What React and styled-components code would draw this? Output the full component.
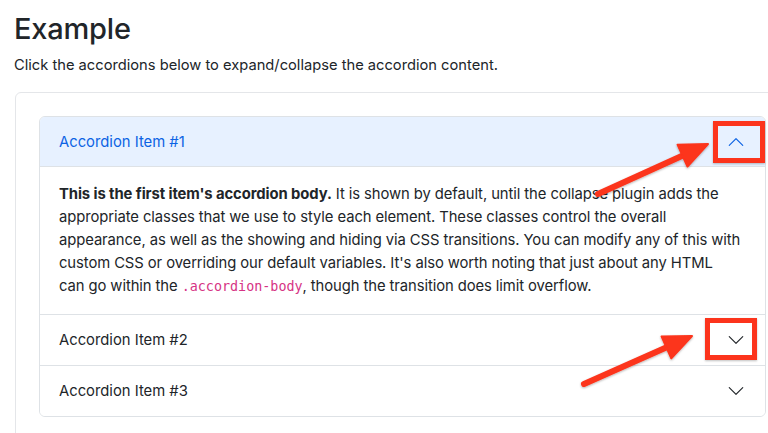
import React, { useState } from "react";
import styled, { createGlobalStyle, css } from "styled-components";

const Global = createGlobalStyle`
  html, body {
    margin: 0;
    padding: 0;
    background: #ffffff;
    overflow: hidden;
  }
  body {
    font-family: Inter, "Liberation Sans", Arial, sans-serif;
    color: #212529;
    -webkit-font-smoothing: antialiased;
  }
`;

const Page = styled.main`
  position: relative;
  width: 768px;
  height: 433px;
  overflow: hidden;
  padding: 11px 0 0 15px;
  box-sizing: border-box;
`;

const Title = styled.h2`
  margin: 0 0 0 -1px;
  font-size: 29px;
  line-height: 35px;
  font-weight: 500;
  letter-spacing: -0.2px;
  color: #212529;
`;

const Lead = styled.p`
  margin: 8px 0 0 -1px;
  font-size: 14.7px;
  line-height: 22px;
  color: #212529;
`;

const Frame = styled.section`
  margin-top: 16px;
  width: 790px;
  height: 400px;
  box-sizing: border-box;
  padding: 23px 23px;
  border: 1px solid #e4e6e9;
  border-radius: 6px;
`;

const Accordion = styled.div`
  width: 725px;
  border: 1px solid #dee2e6;
  border-radius: 6px;
`;

const Item = styled.div`
  position: relative;
  & + & {
    border-top: 1px solid #dee2e6;
  }
`;

const Header = styled.button`
  display: flex;
  align-items: center;
  justify-content: space-between;
  width: 100%;
  box-sizing: border-box;
  height: 50px;
  padding: 0 19px 0 19px;
  border: 0;
  margin: 0;
  font: inherit;
  font-size: 14.8px;
  text-align: left;
  cursor: pointer;
  background: ${(p) => (p.$open ? "#e7f1ff" : "#ffffff")};
  color: ${(p) => (p.$open ? "#0c63e4" : "#212529")};
  ${(p) =>
    p.$open &&
    css`
      border-bottom: 1px solid #dee2e6;
      border-radius: 5px 5px 0 0;
    `}
  ${(p) =>
    p.$last &&
    css`
      border-radius: 0 0 5px 5px;
    `}
`;

const Chevron = styled.svg`
  width: 18px;
  height: 18px;
  flex: none;
  margin-right: 1px;
  transform: ${(p) => (p.$open ? "rotate(180deg)" : "none")};
  color: ${(p) => (p.$open ? "#0c63e4" : "#212529")};
`;

const Body = styled.div`
  padding: 16px 19px 16px 19px;
  font-size: 14.8px;
  line-height: 23px;
  letter-spacing: -0.08px;
  white-space: nowrap;
  color: #212529;
`;

const Code = styled.code`
  font-family: "DejaVu Sans Mono", "Liberation Mono", monospace;
  font-size: 13.4px;
  letter-spacing: 0;
  color: #d63384;
`;

/* red highlight frame drawn over a header's toggle icon */
const Marker = styled.span`
  position: absolute;
  top: ${(p) => p.$top}px;
  right: ${(p) => p.$right}px;
  width: ${(p) => p.$w}px;
  height: ${(p) => p.$h}px;
  box-sizing: border-box;
  border: 5px solid #fc341c;
  box-shadow: 0 1px 2px rgba(0, 0, 0, 0.25);
  pointer-events: none;
`;

const Annotations = styled.svg`
  position: absolute;
  left: 0;
  top: 0;
  width: 768px;
  height: 433px;
  pointer-events: none;
`;

function ChevronIcon({ open }) {
  return (
    <Chevron $open={open} viewBox="0 0 16 16" fill="currentColor" aria-hidden="true">
      <path
        fillRule="evenodd"
        d="M1.646 4.646a.5.5 0 0 1 .708 0L8 10.293l5.646-5.647a.5.5 0 0 1 .708.708l-6 6a.5.5 0 0 1-.708 0l-6-6a.5.5 0 0 1 0-.708z"
      />
    </Chevron>
  );
}

function Arrow({ x1, y1, x2, y2 }) {
  const dx = x2 - x1;
  const dy = y2 - y1;
  const len = Math.hypot(dx, dy);
  const ux = dx / len;
  const uy = dy / len;
  const headLen = 28;
  const headHalf = 12;
  const bx = x2 - ux * headLen;
  const by = y2 - uy * headLen;
  const px = -uy;
  const py = ux;
  const pts = `${x2},${y2} ${bx + px * headHalf},${by + py * headHalf} ${bx - px * headHalf},${by - py * headHalf}`;
  return (
    <g filter="url(#arrowShadow)">
      <line x1={x1} y1={y1} x2={bx + ux * 4} y2={by + uy * 4} stroke="#fc341c" strokeWidth="6" strokeLinecap="round" />
      <polygon points={pts} fill="#fc341c" strokeLinejoin="round" stroke="#fc341c" strokeWidth="2" />
    </g>
  );
}

const items = [
  { id: 1, title: "Accordion Item #1" },
  { id: 2, title: "Accordion Item #2" },
  { id: 3, title: "Accordion Item #3" },
];

export default function App() {
  const [open, setOpen] = useState(1);

  return (
    <>
      <Global />
      <Page>
        <Title>Example</Title>
        <Lead>Click the accordions below to expand/collapse the accordion content.</Lead>
        <Frame>
          <Accordion>
            {items.map((item, i) => {
              const isOpen = open === item.id;
              return (
                <Item key={item.id}>
                  <Header
                    type="button"
                    $open={isOpen}
                    $last={i === items.length - 1 && !isOpen}
                    onClick={() => setOpen(isOpen ? 0 : item.id)}
                  >
                    <span>{item.title}</span>
                    <ChevronIcon open={isOpen} />
                  </Header>
                  {isOpen && (
                    <Body>
                      <strong>This is the first item's accordion body.</strong> It is shown by default, until the
                      collapse plugin adds the
                      <br />
                      appropriate classes that we use to style each element. These classes control the overall
                      <br />
                      appearance, as well as the showing and hiding via CSS transitions. You can modify any of this with
                      <br />
                      custom CSS or overriding our default variables. It's also worth noting that just about any HTML
                      <br />
                      can go within the <Code>.accordion-body</Code>, though the transition does limit overflow.
                    </Body>
                  )}
                  {item.id === 1 && <Marker $top={4} $right={0} $w={52} $h={42} />}
                  {item.id === 2 && <Marker $top={3} $right={8} $w={52} $h={42} />}
                </Item>
              );
            })}
          </Accordion>
        </Frame>
        <Annotations viewBox="0 0 768 433">
          <defs>
            <filter id="arrowShadow" x="-20%" y="-20%" width="140%" height="140%">
              <feDropShadow dx="0" dy="1" stdDeviation="1" floodOpacity="0.3" />
            </filter>
          </defs>
          <Arrow x1={598} y1={194} x2={708} y2={144} />
          <Arrow x1={584} y1={384} x2={692} y2={336} />
        </Annotations>
      </Page>
    </>
  );
}
